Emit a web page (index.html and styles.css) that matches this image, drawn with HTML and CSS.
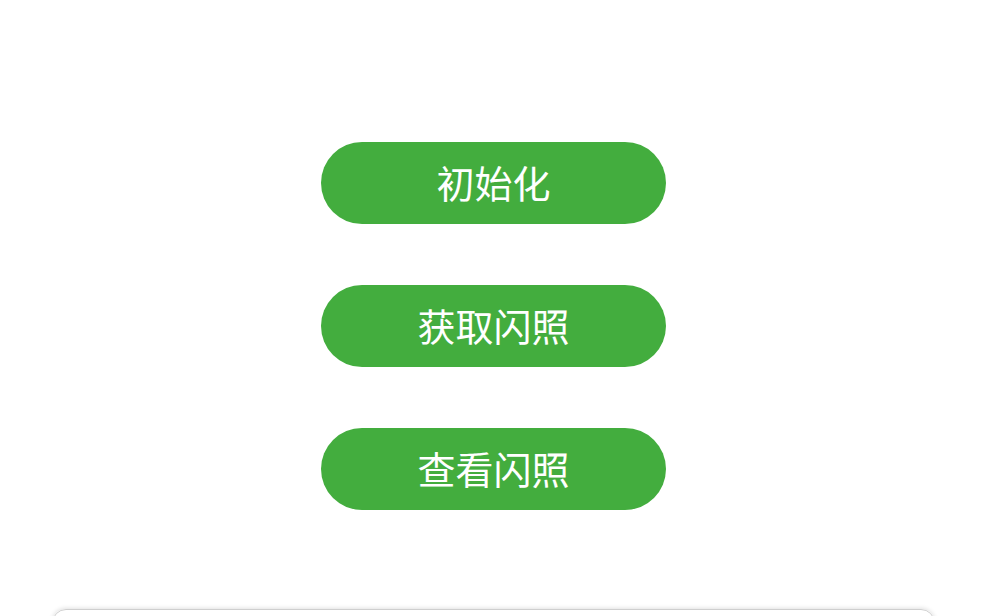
FILE: index.html
```html
<!DOCTYPE html>
<html lang="zh-CN">

<head>
  <meta charset="UTF-8">
  <meta name="viewport" content="width=device-width, initial-scale=1.0">
  <title>闪照</title>
  <link rel="stylesheet" href="styles.css">
</head>

<body>
  <main class="actions">
    <!-- Main action buttons -->
    <button class="action-button">初始化</button>
    <button class="action-button">获取闪照</button>
    <button class="action-button">查看闪照</button>
  </main>

  <!-- Result panel -->
  <section class="result-panel"></section>
</body>

</html>
```

FILE: styles.css
```css
html,
body {
  height: 100%;
  overflow: hidden;
}

body {
  background-color: #ffffff;
  margin: 0;
  padding: 0;
  font-family: "Noto Sans CJK SC", "Noto Sans", sans-serif;
}

.actions {
  display: flex;
  flex-direction: column;
  align-items: center;
  gap: 61px;
  padding-top: 142px;
  padding-left: 1px;
}

.action-button {
  width: 345px;
  height: 82px;
  background-color: #43ad3e;
  color: #ffffff;
  font-family: inherit;
  font-size: 38px;
  border: none;
  border-radius: 41px;
  cursor: pointer;
  padding: 0 0 4px 0;
}

.result-panel {
  margin: 99px 51px 0 52px;
  height: 200px;
  border: 1px solid #cfcfcf;
  border-radius: 14px;
  box-shadow: 0 -1px 4px rgba(0, 0, 0, 0.12);
}
```
